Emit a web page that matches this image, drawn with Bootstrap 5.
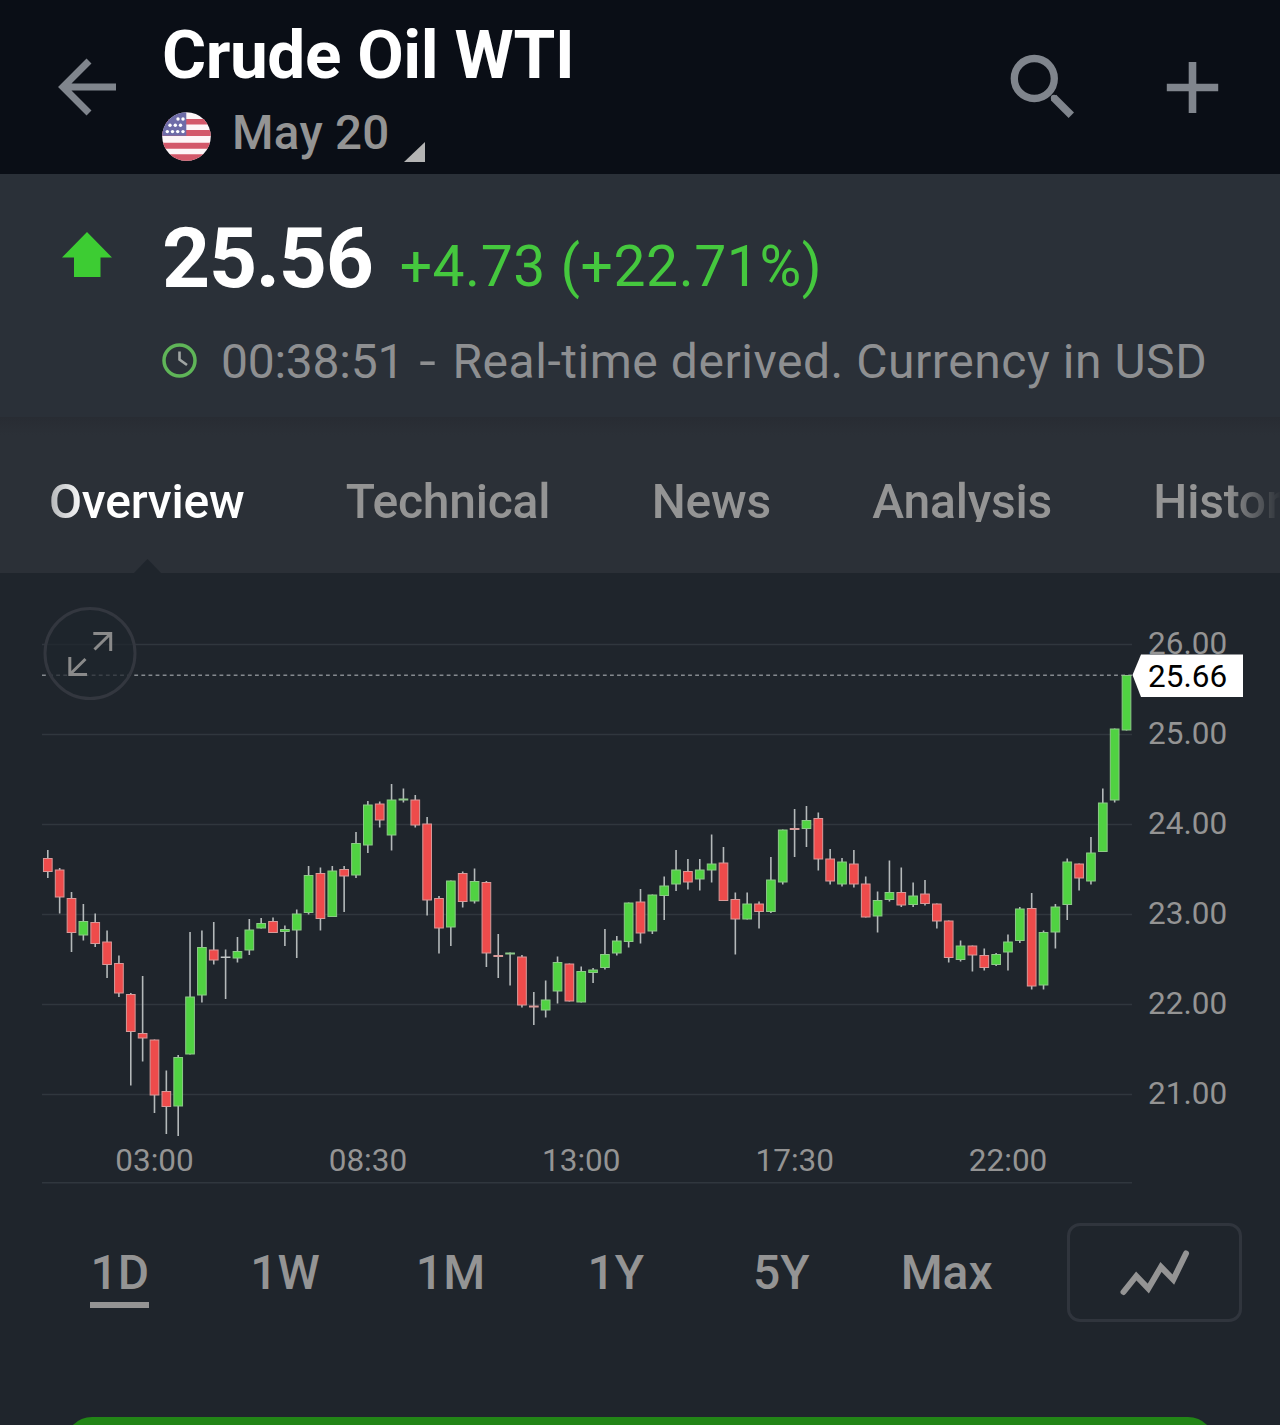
<!DOCTYPE html>
<html lang="en">
<head>
<meta charset="utf-8">
<meta name="viewport" content="width=device-width, initial-scale=1">
<title>Crude Oil WTI</title>
<link href="https://cdn.jsdelivr.net/npm/bootstrap@5.3.0/dist/css/bootstrap.min.css" rel="stylesheet">
<style>
  body { background: #1f252c; font-family: Roboto, sans-serif; color: #949494; width: 1280px; height: 1425px; overflow: hidden; }
  svg { display: block; flex: none; }
  .app-top { height: 174px; background: #0a0e16; padding: 20px 58px 0 57px; }
  .app-top .back { margin: 37px 45px 0 0; }
  .app-name { font-size: 67.5px; line-height: 70px; font-weight: 700; color: #fff; letter-spacing: -.45px; }
  .contract { font-size: 47.5px; line-height: 56px; font-weight: 500; margin-top: 14px; }
  .contract .flag { margin: 8px 21px 0 0; }
  .contract .label { letter-spacing: .3px; padding-top: 1px; }
  .contract .drop { margin: 38px 0 0 14px; }
  .tools { margin-top: 33px; }
  .tools .plus { margin: 8px 3px 0 88px; }
  .quote { height: 243px; background: #2a3038; padding: 43px 0 0 62px; }
  .quote .up { margin: 15px 50px 0 0; }
  .last { font-size: 84px; line-height: 84px; font-weight: 700; color: #fff; letter-spacing: -1.3px; }
  .chg { font-size: 57px; line-height: 84px; color: #45c83e; margin-left: 27px; padding-top: 8px; letter-spacing: .55px; }
  .stamp { font-size: 48px; line-height: 56px; margin-top: 25px; white-space: nowrap; color: #8e8f91; }
  .stamp svg { margin: 0 24px 4px 0; }
  .stamp .clock { letter-spacing: -.25px; }
  .stamp .note { letter-spacing: .55px; margin-left: 16px; }
  .stamp .dash { display: inline-block; transform: scaleX(1.25); margin: 0 5px 0 1px; }
  .tabs-bar { height: 156px; background: linear-gradient(#282c33 0, #2b3037 18px, #2b3037); position: relative; }
  .tabs-row { height: 105px; padding: 57px 0 0 49px; gap: 101.4px; overflow: hidden; white-space: nowrap;
    -webkit-mask-image: linear-gradient(90deg, rgba(0,0,0,.65) 50px, #000 84px, #000 1226px, transparent 1282px); mask-image: linear-gradient(90deg, rgba(0,0,0,.65) 50px, #000 84px, #000 1226px, transparent 1282px); }
  .tabs-row a { font-size: 48px; line-height: 56px; font-weight: 500; color: #949494; text-decoration: none; letter-spacing: -.22px; }
  .tabs-row a.active { color: #fff; }
  .caret-up { position: absolute; left: 134px; bottom: 0; }
  .chart-box { height: 627px; position: relative; }
  .chart-box text { font-size: 31.5px; fill: #949494; }
  .expand { position: absolute; left: 43px; top: 34px; }
  .ranges { padding: 23px 38px 0 37px; height: 217px; }
  .range { width: 165.4px; text-align: center; font-size: 48px; line-height: 56px; font-weight: 500; margin-top: 22px; }
  .range span { display: inline-block; }
  .range.active span { height: 63px; border-bottom: 6px solid #949494; }
  .kind { width: 175px; height: 99px; border: 3px solid #30353d; border-radius: 13px; }
  .cta { height: 60px; margin: 0 65px; border-radius: 27px; background: #228517; }
</style>
<script src="https://cdn.jsdelivr.net/npm/bootstrap@5.3.0/dist/js/bootstrap.bundle.min.js"></script>
</head>
<body>
<header class="app-top d-flex align-items-start">
  <svg class="back" width="60" height="60" fill="none" stroke="#80858d" stroke-width="7"><path d="M59 30H6M32 4L6 30L32 56"/></svg>
  <div class="flex-grow-1">
    <div class="app-name">Crude Oil WTI</div>
    <div class="contract d-flex align-items-start">
      <svg class="flag" width="49" height="49" viewBox="162 112 49 49">
        <clipPath id="fc"><circle cx="186.500" cy="136.500" r="24.300"/></clipPath>
        <g clip-path="url(#fc)"><path fill="#fdf5f7" d="M162 112h49v49h-49z"/>
        <path fill="#d3586a" d="M162 119h49v5.500h-49zM162 130h49v6h-49zM162 142.700h49v6h-49zM162 154.300h49v7h-49z"/>
        <path fill="#6e6ca8" d="M162 112h24.300v23.800H162z"/>
        <g fill="#fff"><circle cx="178" cy="119" r="1.700"/><circle cx="183" cy="119" r="1.700"/><circle cx="170" cy="125.300" r="1.700"/><circle cx="175.300" cy="125.300" r="1.700"/><circle cx="180.500" cy="125.300" r="1.700"/><circle cx="167.300" cy="131.600" r="1.700"/><circle cx="172.500" cy="131.600" r="1.700"/><circle cx="177.700" cy="131.600" r="1.700"/><circle cx="183" cy="131.600" r="1.700"/></g></g>
      </svg>
      <span class="label">May 20</span>
      <svg class="drop" width="21" height="20"><path fill="#b4b4b4" d="M0 20L21 0V20z"/></svg>
    </div>
  </div>
  <div class="tools d-flex">
    <svg width="70" height="70" viewBox="1008 52.500 70 70" fill="none" stroke="#80858d"><circle cx="1034.300" cy="78" r="20" stroke-width="7.300"/><path stroke-width="7.600" d="M1053.500 97L1071.300 114.800"/><circle cx="1054" cy="97.500" r="3.200" fill="#80858d" stroke="none"/></svg>
    <svg class="plus" width="53" height="53" viewBox="1166.500 60.500 53 53" stroke="#80858d" stroke-width="7.600"><path d="M1167.300 87H1218.700M1193 61.400V112.600"/></svg>
  </div>
</header>
<section class="quote d-flex align-items-start">
  <svg class="up" width="50" height="45"><path fill="#3dcc33" d="M25 0L50 25.500H38.500V45H12V25.500H0z"/></svg>
  <div>
    <div class="d-flex"><span class="last">25.56</span><span class="chg">+4.73 (+22.71%)</span></div>
    <div class="stamp d-flex align-items-center">
      <svg width="35" height="35" fill="none" stroke-width="3.500"><circle cx="17.500" cy="17.500" r="15.500" stroke="#5fb558"/><path stroke="#a0a5a3" stroke-width="2.600" d="M17.500 8.500V16.500L25 22"/></svg>
      <span class="clock">00:38:51</span><span class="note"><span class="dash">-</span> Real-time derived. Currency in USD</span>
    </div>
  </div>
</section>
<nav class="tabs-bar">
  <div class="tabs-row d-flex"><a class="active">Overview</a><a>Technical</a><a>News</a><a>Analysis</a><a>Historical</a></div>
  <svg class="caret-up" width="27" height="14"><path fill="#1f252c" d="M0 14L13.500 0L27 14z"/></svg>
</nav>
<section class="chart-box">
  <svg id="chart" width="1280" height="627" viewBox="0 573 1280 627"></svg>
  <svg class="expand" width="94" height="94" viewBox="43 607 94 94" fill="none"><circle cx="90" cy="653.500" r="45" fill="#1f252c" fill-opacity=".72" stroke="#33373f" stroke-width="3"/><path stroke="#8a8a8a" stroke-width="3" d="M93.300 633.500H110.700V651M110.700 633.500L94.500 649.500M69.800 657V674.500H87M69.800 674.500L85.500 659"/></svg>
</section>
<section class="ranges d-flex align-items-start">
  <div class="range active"><span>1D</span></div><div class="range"><span>1W</span></div><div class="range"><span>1M</span></div><div class="range"><span>1Y</span></div><div class="range"><span>5Y</span></div><div class="range"><span>Max</span></div>
  <div class="kind d-flex align-items-center justify-content-center ms-auto">
    <svg width="71" height="47" viewBox="1119 1249 71 47" fill="none" stroke="#949494" stroke-width="6" stroke-linecap="round"><path d="M1123.500 1292L1136.300 1276L1148.300 1288.500L1161 1267L1173.300 1279.500L1186 1253.500"/></svg>
  </div>
</section>
<div class="cta"></div>
<script>
// Each candle: direction, wick top, body top, body bottom, wick bottom
const candles = `R 850 858 872 878|R 868 869.5 897.5 913.5|R 892 898 933 952|G 904 921 935.500 940.500|R 913.500 922 944 947|R 930.500 941.500 965 978|R 955.500 963 993.500 997|R 993 994 1032 1085.500|R 976 1033 1038.500 1061.500|R 1039.500 1039.500 1095.500 1113|R 1070.500 1091 1107 1134|G 1055 1057 1106.500 1136|G 932 996.500 1054.500 1054.500|G 930.500 947 995.500 1002.500|R 922 949.500 960.500 964.500|D 949.500 956.500 958 999|G 937 951 958.500 962.500|G 919 929.500 950.500 955|G 918 923 928.500 928.500|R 917.500 921 933 933|G 925.500 929 932 946|G 909.500 913.500 930.500 958|G 866 875 913 914.500|R 867.500 873 919 930.500|G 866 870.500 917 917|R 866 869 876.500 912|G 832 843 875.500 878|G 801 804.500 845.500 853|R 801.500 803.500 820.500 827.500|G 784 799.500 835.500 850.500|G 788.500 798.500 800.500 802.500|R 795 799.500 825.500 827.500|R 817 823.500 900.500 915.500|R 896 898 928.500 953.500|G 880.500 880.500 927.500 946|R 871.500 873 902 907.500|G 868.500 881 901.500 903.500|R 881 882 953.500 967|R 934 955 957 978|G 952.500 952.500 954.500 985.500|R 955 956.500 1005.500 1007.500|R 992 1005.500 1007.500 1025|G 980.500 999.500 1010.500 1017.500|G 956.500 962 991.500 1003.500|R 963.500 963.500 1001.500 1001.500|G 966.500 971 1002.500 1002.500|G 968 969.500 973 983|G 929 954 968 969.500|G 936 940.500 953.500 955.500|G 902.500 902.500 942 947.500|R 889 901.500 933.500 943.500|G 894.500 894.500 931.500 934|G 876.500 885.500 896 920|G 850 869.500 884.500 891|R 859 871 882.500 889.500|G 859 869.500 879.500 890.500|G 834.500 863.500 870.500 882.500|R 847 862.500 901 901|R 892.500 899 919.500 954.500|G 892.500 903.500 919.500 919.500|R 901.500 903.500 912 928.500|G 857 879.500 912 913|G 829.500 829.500 882.500 884.500|R 809 828 830 857|G 806 820 829 847|R 812.500 818 859.500 870.500|R 849 858.500 881.500 884.500|G 858 861.500 884.500 886.500|R 850 863.500 884.500 887.500|R 876.500 883.500 917.500 917.500|G 891.500 900 916.500 932.500|G 860.500 892 900 901.500|R 867.500 892 905.500 907|G 882.500 895.500 905 907|R 880 893.500 904 905.500|R 903.500 903.500 921.500 928.500|R 920.500 920.500 958 962.500|G 940.500 945.500 960 961.500|R 945.500 945.500 955.500 971.500|R 948.500 955 968 970.500|G 953 954 965 966|G 934.500 941.500 952.500 970.500|G 907 908.500 941 943|R 893 908 986.500 989.500|G 930.500 932 985.500 989.500|G 904 906.500 932.500 948.500|G 858.500 861.500 905 920|R 863.500 863.500 878.500 890.500|G 837 852.500 881.500 884.500|G 788.500 802.500 852 852|G 728.500 728.500 800.500 802.500|G 675 675 730.500 730.500`.split('|').map(s => s.split(' '));
const colors = { R: '#ee4b4b', G: '#50d242', D: '#c4c8c8' };
let out = '';
[26, 25, 24, 23, 22, 21].forEach((p, i) => {
  const y = 644.5 + 90 * i;
  out += `<path stroke="#30373e" stroke-width="1.400" d="M42 ${y}H1132"/><text x="1148" y="${y + 9}">${p}.00</text>`;
});
out += '<path stroke="#30373e" stroke-width="1.600" d="M42 1182.700H1132"/><path stroke="#858a8f" stroke-width="1.500" stroke-dasharray="3.800 3.300" d="M42 675.300H1132"/>';
candles.forEach(([k, h, t, b, l], i) => {
  const x = 47.8 + i * 11.854, w = 8.7;
  out += `<path stroke="#b4b9ba" stroke-width="1.600" d="M${x} ${h}V${l}"/>`;
  out += `<rect x="${x - w / 2}" y="${+t + .5}" width="${w}" height="${Math.max(b - t - 1, .5)}" fill="${colors[k]}" stroke="${k === 'R' ? '#d79a99' : k === 'G' ? '#8dc988' : '#c4c8c8'}" stroke-width="1"/>`;
});
out += '<path fill="#fff" d="M1132.500 675L1141 654.500H1243V697H1141z"/><text x="1148" y="687" style="fill:#000">25.66</text>';
['03:00', '08:30', '13:00', '17:30', '22:00'].forEach((s, i) => {
  out += `<text x="${154.5 + i * 213.4}" y="1171" text-anchor="middle">${s}</text>`;
});
document.getElementById('chart').innerHTML = out;
</script>
</body>
</html>
